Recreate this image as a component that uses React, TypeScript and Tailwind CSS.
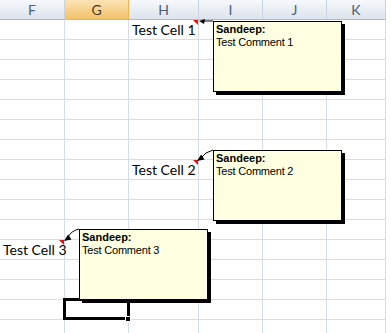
import React from "react";

const cols = [
  { name: "F", w: "w-[65px]" },
  { name: "G", w: "w-[64px]" },
  { name: "H", w: "w-[70px]" },
  { name: "I", w: "w-[64px]" },
  { name: "J", w: "w-[64px]" },
  { name: "K", w: "w-[59px]" },
];

// row number -> { col index: text }
const cells: Record<number, Record<number, string>> = {
  1: { 2: "Test Cell 1" },
  8: { 2: "Test Cell 2" },
  12: { 0: "Test Cell 3" },
};

const comments = [
  { text: "Test Comment 1", pos: "left-[213px] top-[21px]" },
  { text: "Test Comment 2", pos: "left-[213px] top-[150px]" },
  { text: "Test Comment 3", pos: "left-[79px] top-[229px]" },
];

const rows = Array.from({ length: 16 }, (_, i) => i + 1);

const Comment = ({ text, pos }: { text: string; pos: string }) => (
  <div
    className={`absolute ${pos} w-[129px] h-[71px] bg-[#ffffe1] border border-black shadow-[3px_3px_0_0_#000] px-[2px] pt-[1px] text-[11px] leading-[13px] text-black`}
    style={{ fontFamily: '"Liberation Sans", Arial, sans-serif' }}
  >
    <div className="font-bold">Sandeep:</div>
    <div className="tracking-[-0.2px]">{text}</div>
  </div>
);

const App = () => {
  return (
    <div
      className="relative w-[391px] h-[333px] overflow-hidden bg-white"
      style={{ fontFamily: "Lato, 'Liberation Sans', sans-serif" }}
    >
      <div className="flex h-[20px]">
        {cols.map((c) => (
          <div
            key={c.name}
            className={`${c.w} h-[20px] flex items-center justify-center border-r border-b text-[14px] ${
              c.name === "G"
                ? "bg-gradient-to-b from-[#fbe3b4] to-[#f3c26a] border-[#f0b44c] text-[#4a3a1c]"
                : "bg-gradient-to-b from-[#f6f8fb] to-[#dde4ed] border-r-[#c8d3df] border-b-[#a9bccf] text-[#4e5f73]"
            }`}
          >
            {c.name}
          </div>
        ))}
      </div>
      {rows.map((r) => (
        <div key={r} className="flex h-[20px]">
          {cols.map((c, ci) => (
            <div
              key={c.name}
              className={`${c.w} h-[20px] border-r border-b border-[#d6dde8] flex items-end pl-[3px] pb-[1px] text-[14px] leading-[17px] text-black whitespace-nowrap`}
            >
              {cells[r]?.[ci] ?? ""}
            </div>
          ))}
        </div>
      ))}

      {/* selected cell G15 */}
      <div className="absolute left-[63px] top-[298px] w-[67px] h-[22px] border-[3px] border-black" />
      <div className="absolute left-[125px] top-[316px] w-[6px] h-[6px] bg-black border border-white" />

      <svg className="absolute inset-0 pointer-events-none" width="391" height="333">
        <polygon points="193,20 198,20 198,25" fill="#e01010" />
        <polygon points="193,160 198,160 198,165" fill="#e01010" />
        <polygon points="59,240 64,240 64,245" fill="#e01010" />
        <line x1="213" y1="21" x2="202" y2="21" stroke="black" strokeWidth="1" />
        <polygon points="199,21 205,19 204,24" fill="black" />
        <path d="M213,150 Q205,152 201,158" stroke="black" strokeWidth="1" fill="none" />
        <polygon points="197,161 204.5,159.5 201.1,154.5" fill="black" />
        <path d="M79,229 Q71,231 68,237" stroke="black" strokeWidth="1" fill="none" />
        <polygon points="64,241 71.5,239.5 68.1,234.5" fill="black" />
      </svg>

      {comments.map((c) => (
        <Comment key={c.text} text={c.text} pos={c.pos} />
      ))}
    </div>
  );
};

export default App;
